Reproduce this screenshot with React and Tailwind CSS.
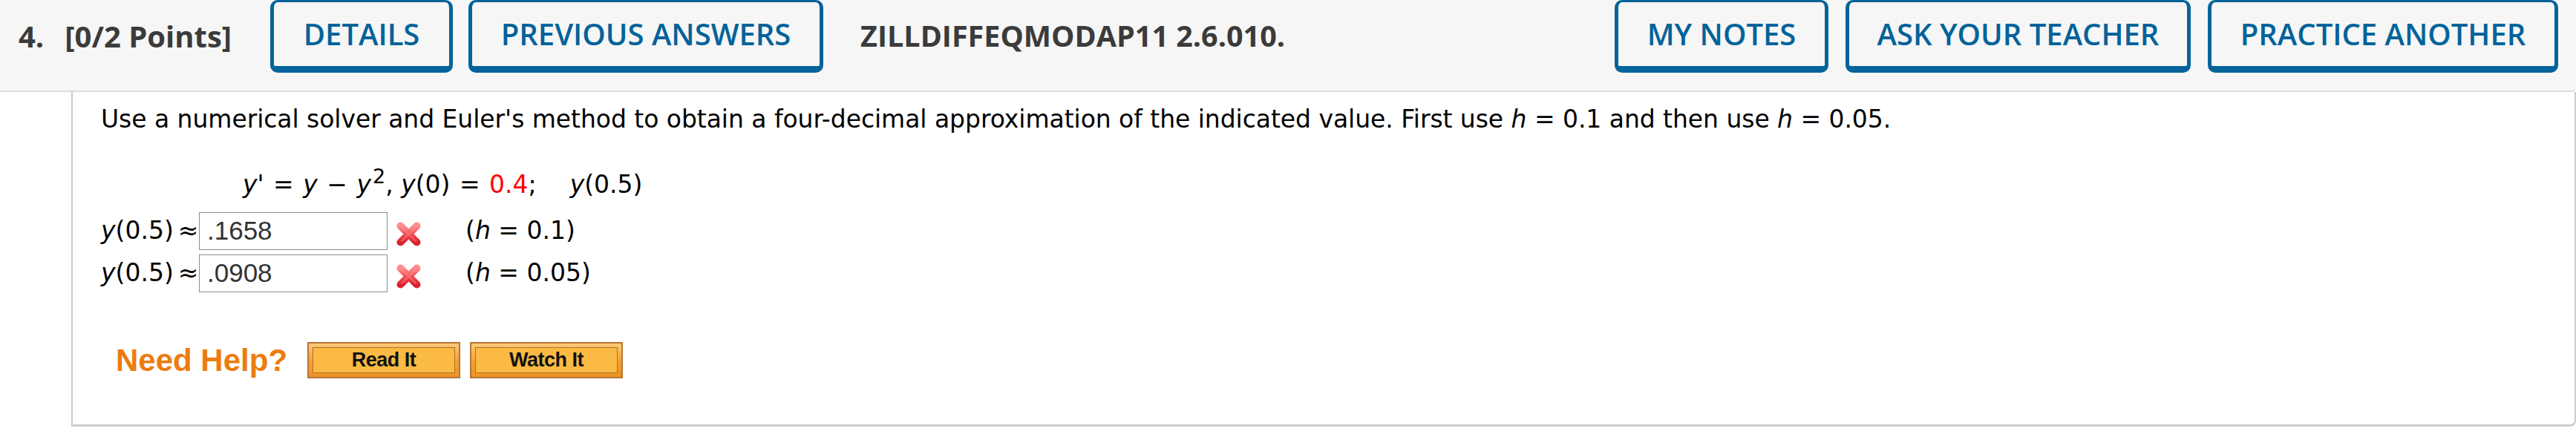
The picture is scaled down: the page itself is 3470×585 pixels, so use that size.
const HEADER_BTN =
  "flex h-[98px] shrink-0 items-center justify-center rounded-[10px] border-[5px] border-t-[3px] border-b-[9px] border-[#03639a] text-[40px] font-semibold text-[#03639a]";

function HeaderButton({ label, width }) {
  return <div className={`${HEADER_BTN} ${width}`}>{label}</div>;
}

function WrongMark() {
  return (
    <svg width="35" height="35" viewBox="0 0 35 35" aria-hidden>
      <defs>
        <linearGradient id="wrong-g" x1="0" y1="0" x2="0" y2="1">
          <stop offset="0%" stopColor="#ff8f8f" />
          <stop offset="55%" stopColor="#f04a4f" />
          <stop offset="100%" stopColor="#d9232d" />
        </linearGradient>
      </defs>
      <path d="M6.5 6.5 L28.5 28.5 M28.5 6.5 L6.5 28.5" stroke="url(#wrong-g)" strokeWidth="10" strokeLinecap="round" />
      <path d="M8 8 L27 27 M27 8 L8 27" stroke="#ff9a9a" strokeWidth="2" strokeLinecap="round" opacity="0.45" />
    </svg>
  );
}

function AnswerRow({ value, step }) {
  return (
    <div className="flex h-[51px] items-start">
      <div className="mt-[5px] flex w-[132px] shrink-0 leading-[40px]">
        <span>
          <i>y</i>(0.5)
        </span>
        <span className="ml-[6px]">≈</span>
      </div>
      <input
        readOnly
        defaultValue={value}
        className="h-[51px] w-[254px] shrink-0 border border-[#8c8c8c] bg-white pl-[10px] font-['Liberation_Sans',Arial,sans-serif] text-[35px] text-[#333] outline-none"
      />
      <div className="ml-[11px] mt-[12px] shrink-0">
        <WrongMark />
      </div>
      <div className="ml-[59px] mt-[5px] leading-[40px]">
        (<i>h</i> = {step})
      </div>
    </div>
  );
}

function HelpButton({ label }) {
  return (
    <div className="flex h-[49px] w-[206px] shrink-0 border-2 border-[#b47637] bg-linear-to-b from-[#fcc978] via-[#f5a233] to-[#ee9223] p-[5px]">
      <div className="flex flex-1 items-center justify-center border border-[#ad6f2e] bg-[#fbba43] text-[27px] font-bold tracking-[-0.5px] text-[#111]">
        {label}
      </div>
    </div>
  );
}

function Op({ children }) {
  return <span className="mx-[2px]">{children}</span>;
}

export default function App() {
  return (
    <div className="h-[585px] w-full overflow-hidden bg-white">
      <div className="flex h-[124px] items-start rounded-br-[6px] border-b-2 border-[#dedede] bg-[#f6f6f6] font-['Open_Sans',sans-serif]">
        <div className="flex h-[98px] items-center pl-[25px] text-[40px] font-bold text-[#3b3b3b]">
          <span>4.</span>
          <span className="ml-[28px]">[0/2 Points]</span>
        </div>
        <div className="ml-[52px] flex gap-[21px]">
          <HeaderButton label="DETAILS" width="w-[246px]" />
          <HeaderButton label="PREVIOUS ANSWERS" width="w-[478px]" />
        </div>
        <div className="ml-[50px] flex h-[98px] items-center text-[39.5px] font-bold text-[#3b3b3b]">
          ZILLDIFFEQMODAP11 2.6.010.
        </div>
        <div className="ml-auto flex gap-[23px] pr-[24px]">
          <HeaderButton label="MY NOTES" width="w-[288px]" />
          <HeaderButton label="ASK YOUR TEACHER" width="w-[465px]" />
          <HeaderButton label="PRACTICE ANOTHER" width="w-[472px]" />
        </div>
      </div>

      <div className="ml-[96px] rounded-br-[8px] border-b-[3px] border-l-2 border-r-2 border-[#cccccc] pb-[62px] pl-[38px] pt-[17px] font-['Verdana','DejaVu_Sans',sans-serif] text-[33px] text-black">
        <p className="leading-[40px] tracking-[-0.05px]">
          Use a numerical solver and Euler's method to obtain a four-decimal approximation of the indicated value. First use{" "}
          <i>h</i> = 0.1 and then use <i>h</i> = 0.05.
        </p>

        <p className="ml-[191px] mt-[48px] leading-[40px]">
          <i>y</i>' <Op>=</Op> <i>y</i> <Op>−</Op> <i>y</i>
          <sup className="ml-[2px] text-[27px]">2</sup>, <i>y</i>(0) <Op>=</Op> <span className="text-[#ff0000]">0.4</span>;
          <span className="ml-[45px]">
            <i>y</i>(0.5)
          </span>
        </p>

        <div className="mt-[17px] flex flex-col gap-[6px]">
          <AnswerRow value=".1658" step="0.1" />
          <AnswerRow value=".0908" step="0.05" />
        </div>

        <div className="ml-[20px] mt-[67px] flex h-[49px] items-center font-['Liberation_Sans',Arial,sans-serif]">
          <span className="text-[42px] font-bold text-[#ec7c0e]">Need Help?</span>
          <div className="ml-[27px] flex gap-[13px]">
            <HelpButton label="Read It" />
            <HelpButton label="Watch It" />
          </div>
        </div>
      </div>
    </div>
  );
}
